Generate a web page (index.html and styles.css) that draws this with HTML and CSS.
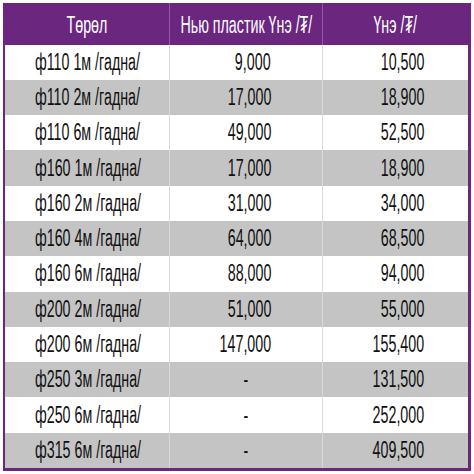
FILE: index.html
```html
<!DOCTYPE html>
<html lang="mn">
<head>
<meta charset="utf-8">
<title>Үнийн хүснэгт</title>
<link rel="stylesheet" href="styles.css">
</head>
<body>
<div class="table">
  <div class="cell head"><span>Төрөл</span></div>
  <div class="cell head div"><span>Нью пластик Үнэ /₮/</span></div>
  <div class="cell head div"><span>Үнэ /₮/</span></div>

  <div class="cell name"><span>ф110 1м /гадна/</span></div>
  <div class="cell num2 div"><span>9,000</span></div>
  <div class="cell num3 div"><span>10,500</span></div>

  <div class="cell name alt"><span>ф110 2м /гадна/</span></div>
  <div class="cell num2 div alt"><span>17,000</span></div>
  <div class="cell num3 div alt"><span>18,900</span></div>

  <div class="cell name"><span>ф110 6м /гадна/</span></div>
  <div class="cell num2 div"><span>49,000</span></div>
  <div class="cell num3 div"><span>52,500</span></div>

  <div class="cell name alt"><span>ф160 1м /гадна/</span></div>
  <div class="cell num2 div alt"><span>17,000</span></div>
  <div class="cell num3 div alt"><span>18,900</span></div>

  <div class="cell name"><span>ф160 2м /гадна/</span></div>
  <div class="cell num2 div"><span>31,000</span></div>
  <div class="cell num3 div"><span>34,000</span></div>

  <div class="cell name alt"><span>ф160 4м /гадна/</span></div>
  <div class="cell num2 div alt"><span>64,000</span></div>
  <div class="cell num3 div alt"><span>68,500</span></div>

  <div class="cell name"><span>ф160 6м /гадна/</span></div>
  <div class="cell num2 div"><span>88,000</span></div>
  <div class="cell num3 div"><span>94,000</span></div>

  <div class="cell name alt"><span>ф200 2м /гадна/</span></div>
  <div class="cell num2 div alt"><span>51,000</span></div>
  <div class="cell num3 div alt"><span>55,000</span></div>

  <div class="cell name"><span>ф200 6м /гадна/</span></div>
  <div class="cell num2 div"><span>147,000</span></div>
  <div class="cell num3 div"><span>155,400</span></div>

  <div class="cell name alt"><span>ф250 3м /гадна/</span></div>
  <div class="cell dash div alt"><span>-</span></div>
  <div class="cell num3 div alt"><span>131,500</span></div>

  <div class="cell name"><span>ф250 6м /гадна/</span></div>
  <div class="cell dash div"><span>-</span></div>
  <div class="cell num3 div"><span>252,000</span></div>

  <div class="cell name alt"><span>ф315 6м /гадна/</span></div>
  <div class="cell dash div alt"><span>-</span></div>
  <div class="cell num3 div alt"><span>409,500</span></div>
</div>
</body>
</html>
```
FILE: styles.css
```css
html, body {
  margin: 0;
  padding: 0;
  background: #ffffff;
}

.table {
  margin: 3px;
  width: 468px;
  height: 468px;
  box-sizing: border-box;
  border-left: 2px solid #6b267f;
  border-right: 3px solid #6b267f;
  border-bottom: 3px solid #6b267f;
  display: grid;
  grid-template-columns: 164px 153px 1fr;
  grid-template-rows: 41.5px repeat(12, 1fr);
  font-family: "Liberation Sans", Arial, sans-serif;
  font-size: 23px;
  color: #111111;
  background: #ffffff;
}

.cell {
  display: flex;
  align-items: center;
  min-width: 0;
  overflow: hidden;
  white-space: nowrap;
}

.cell span {
  display: inline-block;
  transform: scaleX(0.62);
}

.head {
  background: #6b267f;
  color: #ffffff;
  justify-content: center;
  padding-top: 4px;
  box-sizing: border-box;
}

.head span {
  transform-origin: center;
}

.head.div {
  border-left: 1px solid #8f5aa1;
}

.div {
  border-left: 1px solid #dcdcdc;
}

.alt {
  background: #c4c4c4;
}

.alt.div {
  border-left-color: #d9d9d9;
}

.name {
  justify-content: flex-start;
  padding-left: 30px;
}

.name span {
  transform-origin: left center;
}

.num2 {
  justify-content: flex-end;
  padding-right: 51px;
}

.num3 {
  justify-content: flex-end;
  padding-right: 44px;
}

.num2 span,
.num3 span {
  transform-origin: right center;
}

.dash {
  justify-content: center;
}

.dash span {
  transform-origin: center;
}
```
